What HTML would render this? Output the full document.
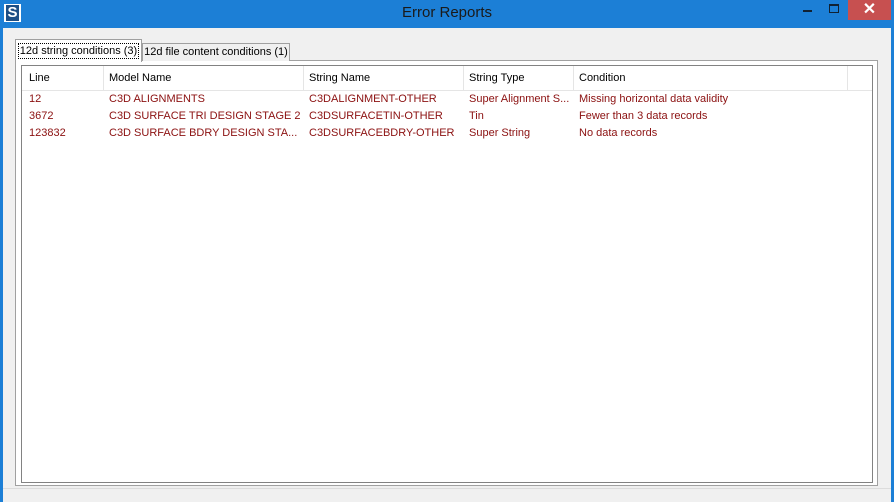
<!DOCTYPE html><html><head><style>
body{margin:0;width:894px;height:502px;overflow:hidden;background:#1c7fd6;font-family:"Liberation Sans",sans-serif;font-size:11px;position:relative}
.abs{position:absolute;white-space:nowrap}
.title{left:0;top:0;width:894px;height:28px;text-align:center;line-height:26px;font-size:15px;color:#1a1a1a}
.client{left:3px;top:28px;width:888px;height:474px;background:#f0f0f0}
.cell{position:absolute;white-space:nowrap}
.red{color:#8b1010}
</style></head><body>
<div class="abs title">Error Reports</div>
<div class="abs" style="left:4px;top:4px;width:17px;height:18px;background:#fff;"><div style="position:absolute;left:2px;top:1px;width:13px;height:16px;background:#1e4f86;color:#fff;font-weight:bold;font-size:15px;line-height:16px;text-align:center">S</div></div>
<div class="abs" style="left:803px;top:10px;width:9px;height:2px;background:#123"></div>
<div class="abs" style="left:829px;top:4px;width:8px;height:6px;border:1px solid #123;border-top-width:2px"></div>
<div class="abs" style="left:848px;top:0;width:43px;height:20px;background:#c75050;color:#fff;text-align:center;font-size:16px;line-height:20px;font-weight:bold">✕</div>
<div class="abs client"></div>
<div class="abs" style="left:15px;top:60px;width:861px;height:424px;border:1px solid #a0a0a0;background:#fff"></div>
<div class="abs" style="left:142px;top:43px;width:146px;height:17px;border:1px solid #a0a0a0;border-bottom:none;background:#f0f0f0;text-align:center;line-height:17px;font-size:11px">12d file content conditions (1)</div>
<div class="abs" style="left:15px;top:39px;width:125px;height:22px;border:1px solid #a0a0a0;border-bottom:none;background:#fff"><div style="margin:3px 2px;border:1px dotted #000;line-height:14px;text-align:center;font-size:11px">12d string conditions (3)</div></div>
<div class="abs" style="left:21px;top:65px;width:850px;height:416px;border:1px solid #828282;background:#fff"></div>
<div class="abs" style="left:22px;top:90px;width:850px;height:1px;background:#e5e5e5"></div>
<div class="abs" style="left:103px;top:66px;width:1px;height:24px;background:#e5e5e5"></div>
<div class="abs" style="left:303px;top:66px;width:1px;height:24px;background:#e5e5e5"></div>
<div class="abs" style="left:463px;top:66px;width:1px;height:24px;background:#e5e5e5"></div>
<div class="abs" style="left:573px;top:66px;width:1px;height:24px;background:#e5e5e5"></div>
<div class="abs" style="left:847px;top:66px;width:1px;height:24px;background:#e5e5e5"></div>
<div class="cell" style="left:29px;top:72px">Line</div>
<div class="cell" style="left:109px;top:72px">Model Name</div>
<div class="cell" style="left:309px;top:72px">String Name</div>
<div class="cell" style="left:469px;top:72px">String Type</div>
<div class="cell" style="left:579px;top:72px">Condition</div>
<div class="red">
<div class="cell" style="left:29px;top:93px">12</div>
<div class="cell" style="left:109px;top:93px">C3D ALIGNMENTS</div>
<div class="cell" style="left:309px;top:93px">C3DALIGNMENT-OTHER</div>
<div class="cell" style="left:469px;top:93px">Super Alignment S...</div>
<div class="cell" style="left:579px;top:93px">Missing horizontal data validity</div>
<div class="cell" style="left:29px;top:110px">3672</div>
<div class="cell" style="left:109px;top:110px">C3D SURFACE TRI DESIGN STAGE 2</div>
<div class="cell" style="left:309px;top:110px">C3DSURFACETIN-OTHER</div>
<div class="cell" style="left:469px;top:110px">Tin</div>
<div class="cell" style="left:579px;top:110px">Fewer than 3 data records</div>
<div class="cell" style="left:29px;top:127px">123832</div>
<div class="cell" style="left:109px;top:127px">C3D SURFACE BDRY DESIGN STA...</div>
<div class="cell" style="left:309px;top:127px">C3DSURFACEBDRY-OTHER</div>
<div class="cell" style="left:469px;top:127px">Super String</div>
<div class="cell" style="left:579px;top:127px">No data records</div>
</div>
<div class="abs" style="left:3px;top:488px;width:888px;height:1px;background:#dcdcdc"></div>
</body></html>
